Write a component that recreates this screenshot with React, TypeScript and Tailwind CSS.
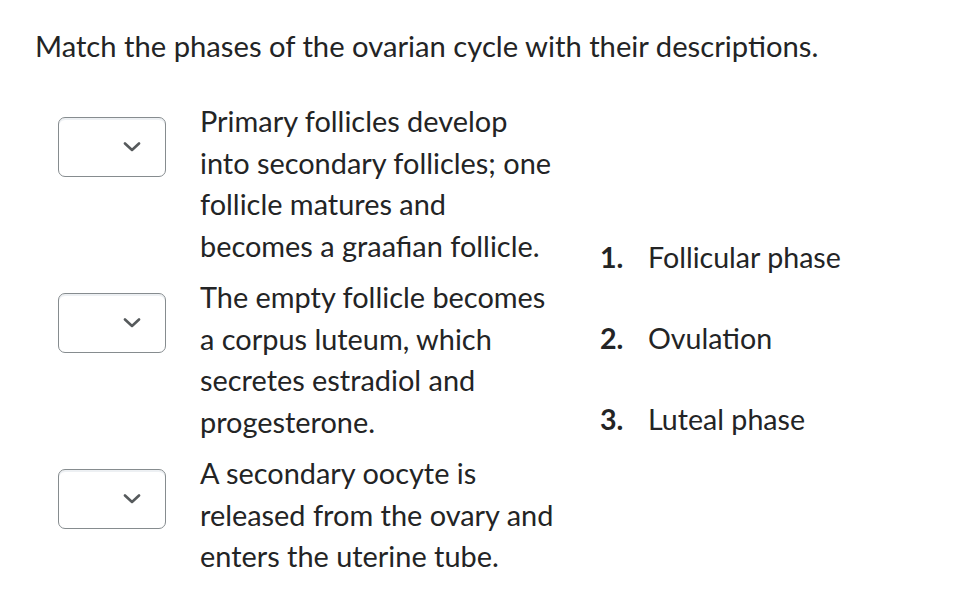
import React from "react";

const descriptions = [
  "Primary follicles develop into secondary follicles; one follicle matures and becomes a graafian follicle.",
  "The empty follicle becomes a corpus luteum, which secretes estradiol and progesterone.",
  "A secondary oocyte is released from the ovary and enters the uterine tube.",
];

const phases = ["Follicular phase", "Ovulation", "Luteal phase"];

function Chevron() {
  return (
    <svg width="18" height="10" viewBox="0 0 18 10" fill="none">
      <path
        d="M2 1.5 L9 8 L16 1.5"
        stroke="#565a5c"
        strokeWidth="2.6"
        strokeLinecap="round"
        strokeLinejoin="round"
      />
    </svg>
  );
}

function MatchSelect() {
  return (
    <div className="mt-[17px] flex h-[60px] w-[108px] shrink-0 items-center justify-end rounded-[7px] border border-[#868c8f] bg-white pr-[24px] shadow-[inset_0_2px_0_0_rgba(185,194,208,0.25)]">
      <Chevron />
    </div>
  );
}

export default function App() {
  return (
    <div
      className="min-h-[609px] w-[959px] bg-white pl-[35px] pt-[27px] text-[#232425]"
      style={{ fontFamily: "Lato, 'Open Sans', sans-serif" }}
    >
      <h1 className="text-[29.2px] leading-[38px] font-normal">
        Match the phases of the ovarian cycle with their descriptions.
      </h1>
      <div className="mt-[35px] flex">
        <div className="ml-[23px] flex flex-col gap-[9.6px]">
          {descriptions.map((d) => (
            <div key={d} className="flex">
              <MatchSelect />
              <p className="ml-[34px] w-[357px] text-[28.9px] leading-[41.6px]">{d}</p>
            </div>
          ))}
        </div>
        <ol className="ml-[43px] flex flex-col justify-center gap-[39.4px]">
          {phases.map((p, i) => (
            <li key={p} className="flex text-[28.6px] leading-[41.6px]">
              <span className="w-[48px] font-bold">{i + 1}.</span>
              <span>{p}</span>
            </li>
          ))}
        </ol>
      </div>
    </div>
  );
}
